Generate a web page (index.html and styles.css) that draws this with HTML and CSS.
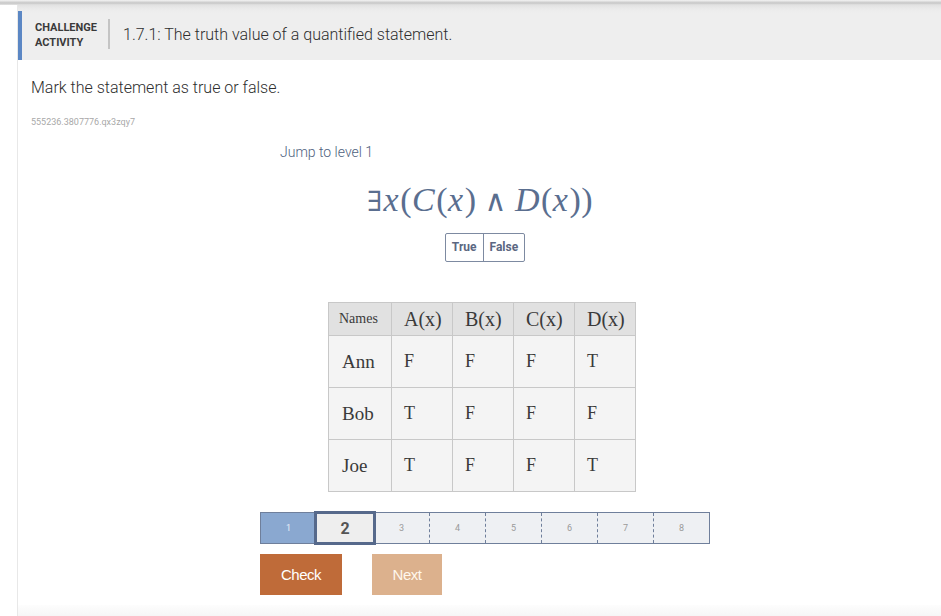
FILE: index.html
```html
<!DOCTYPE html>
<html>
<head>
<meta charset="utf-8">
<link rel="stylesheet" href="styles.css">
</head>
<body>
<div class="shade"></div>
<div class="page">
  <div class="header">
    <div class="accent"></div>
    <div class="label">CHALLENGE<br>ACTIVITY</div>
    <div class="sep"></div>
    <div class="title">1.7.1: The truth value of a quantified statement.</div>
  </div>
  <div class="content">
    <p class="prompt">Mark the statement as true or false.</p>
    <p class="ident">555236.3807776.qx3zqy7</p>
    <div class="activity">
      <div class="column">
        <div class="jump">Jump to level 1</div>
        <div class="formula"><span class="up">∃</span><i>x</i>(<i>C</i>(<i>x</i>)<span class="op">∧</span><i>D</i>(<i>x</i>))</div>
        <div class="choices"><span class="choice">True</span><span class="choice">False</span></div>
        <table class="truth">
          <tr class="head"><th class="names">Names</th><th>A(x)</th><th>B(x)</th><th>C(x)</th><th>D(x)</th></tr>
          <tr><td class="name">Ann</td><td>F</td><td>F</td><td>F</td><td>T</td></tr>
          <tr><td class="name">Bob</td><td>T</td><td>F</td><td>F</td><td>F</td></tr>
          <tr><td class="name">Joe</td><td>T</td><td>F</td><td>F</td><td>T</td></tr>
        </table>
        <div class="levels">
          <div class="lvl done">1</div>
          <div class="lvl current">2</div>
          <div class="lvl">3</div>
          <div class="lvl dash">4</div>
          <div class="lvl dash">5</div>
          <div class="lvl dash">6</div>
          <div class="lvl dash">7</div>
          <div class="lvl dash">8</div>
        </div>
        <div class="actions">
          <button class="btn check">Check</button>
          <button class="btn next">Next</button>
        </div>
      </div>
    </div>
  </div>
  <div class="foot"></div>
</div>
</body>
</html>
```

FILE: styles.css
```css
html, body {
  margin: 0;
  padding: 0;
  background: #ffffff;
  font-family: Roboto, "Liberation Sans", sans-serif;
  color: #333;
}
.shade {
  height: 5px;
  background: linear-gradient(#f4f4f4 0, #c6c6c6 3px, #e4e4e4 5px);
}
.page {
  margin-left: 17px;
  border-left: 1px solid #e8e8e8;
  height: 611px;
  display: flex;
  flex-direction: column;
}
.header {
  height: 55px;
  background: linear-gradient(#e2e2e2 0, #ebebeb 4px, #eeeeee 8px);
  display: flex;
  align-items: center;
}
.accent {
  align-self: stretch;
  margin-top: 6px;
  width: 4px;
  background: #5b87c4;
}
.label {
  margin-left: 13px;
  font-size: 11px;
  font-weight: 700;
  line-height: 15px;
  color: #3a3a3a;
  margin-top: 4px;
}
.sep {
  width: 2px;
  height: 30px;
  background: #c4c4c4;
  margin-left: 11px;
  margin-top: 3px;
}
.title {
  margin-left: 13px;
  font-size: 16px;
  font-weight: 300;
  color: #2e2e2e;
  margin-top: 3px;
}
.content {
  padding-left: 13px;
  flex: 1;
}
.prompt {
  margin: 18px 0 0;
  font-size: 16px;
  font-weight: 300;
  line-height: 19px;
  color: #2e2e2e;
}
.ident {
  margin: 20px 0 0;
  font-size: 9px;
  line-height: 11px;
  color: #a8a8a8;
}
.activity {
  display: flex;
  justify-content: center;
  margin-left: -13px;
  padding-left: 11px;
}
.column {
  width: 450px;
  display: flex;
  flex-direction: column;
  align-items: center;
}
.jump {
  align-self: flex-start;
  margin-left: 20px;
  margin-top: 16px;
  font-size: 14px;
  font-weight: 300;
  line-height: 16px;
  color: #4e5f7e;
}
.formula {
  margin-top: 21px;
  margin-left: -10px;
  font-family: "Liberation Serif", serif;
  font-size: 34px;
  line-height: 38px;
  letter-spacing: 0.5px;
  color: #5a6e8f;
}
.formula i {
  font-style: italic;
  padding-right: 1px;
}
.formula .up {
  font-family: "DejaVu Serif", serif;
  font-size: 28px;
  margin-right: 1px;
}
.formula .op {
  font-family: "DejaVu Sans", sans-serif;
  font-size: 30px;
  margin: 0 8px;
}
.choices {
  margin-top: 12px;
  display: flex;
  border: 1px solid #7d8aa1;
  border-radius: 2px;
  height: 27px;
}
.choice {
  font-size: 12px;
  font-weight: 700;
  color: #5b6782;
  padding: 0 6px;
  line-height: 27px;
}
.choice + .choice {
  border-left: 1px solid #7d8aa1;
}
.truth {
  margin-top: 40px;
  margin-left: -6px;
  border-collapse: collapse;
  font-family: "Liberation Serif", serif;
  color: #3a3a3a;
}
.truth th, .truth td {
  border: 1px solid #c8c8c8;
  text-align: left;
  font-weight: 400;
  padding: 0 0 0 12px;
  width: 48px;
}
.truth th.names {
  width: 52px;
  font-size: 14px;
  padding-left: 10px;
}
.truth th {
  background: #e1e1e1;
  height: 32px;
  font-size: 20px;
}
.truth td {
  background: #f4f4f4;
  height: 51px;
  font-size: 18px;
}
.truth td.name {
  font-size: 19px;
  padding-left: 13px;
}
.levels {
  margin-top: 20px;
  width: 448px;
  height: 30px;
  border: 1px solid #6f7f9b;
  display: flex;
  background: #eef0f3;
}
.lvl {
  flex: 1;
  display: flex;
  align-items: center;
  justify-content: center;
  font-size: 9px;
  color: #9a9a9a;
}
.lvl.dash {
  border-left: 1px dashed #6f7f9b;
}
.lvl.done {
  background: #8aa8d0;
  color: #e7eef8;
}
.lvl.current {
  position: relative;
  background: #eeeeee;
  outline: 3px solid #56698b;
  outline-offset: -1px;
  font-size: 16px;
  font-weight: 700;
  color: #555;
  flex: 0 0 58px;
}
.actions {
  align-self: flex-start;
  margin-top: 10px;
  display: flex;
  gap: 30px;
}
.btn {
  border: none;
  height: 41px;
  font-family: "Liberation Sans", Arial, sans-serif;
  font-size: 15px;
  letter-spacing: -0.5px;
  color: #fff;
  padding: 0;
}
.check {
  width: 82px;
  background: #bf6b39;
}
.next {
  width: 70px;
  background: #dcb18d;
  color: #fff7ec;
}
.foot {
  height: 11px;
  background: linear-gradient(#fdfdfd, #f6f6f6);
}
```
